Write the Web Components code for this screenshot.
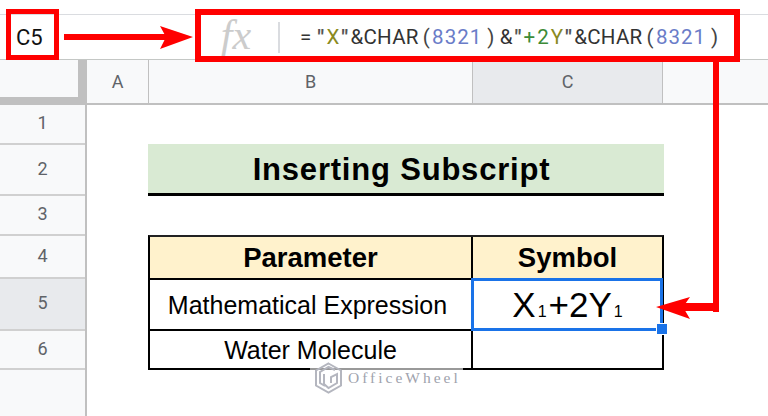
<!DOCTYPE html>
<html>
<head>
<meta charset="utf-8">
<style>
  html, body { margin: 0; padding: 0; background: #fff; }
  body { width: 768px; height: 416px; overflow: hidden; font-family: "Liberation Sans", Arial, sans-serif; }
</style>
</head>
<body>
<sheet-shot>
  <formula-bar slot="bar" cell="C5"></formula-bar>
  <col-headers slot="cols"></col-headers>
  <row-headers slot="rows"></row-headers>
  <data-table slot="body"></data-table>
</sheet-shot>

<script>
class SheetShot extends HTMLElement {
    constructor() {
        super();
        this.attachShadow({ mode: "open" });
    }

    connectedCallback() {
        this.shadowRoot.innerHTML = /* html */ `
            <style>
                :host {
                    display: grid;
                    position: relative;
                    width: 768px;
                    height: 416px;
                    grid-template-columns: 87px 1fr;
                    grid-template-rows: 60px 45px 1fr;
                    overflow: hidden;
                }
                ::slotted([slot=bar]) { grid-column: 1 / 3; grid-row: 1; }
                ::slotted([slot=cols]) { grid-column: 2; grid-row: 2; }
                ::slotted([slot=rows]) { grid-column: 1; grid-row: 3; }
                ::slotted([slot=body]) { grid-column: 2; grid-row: 3; }
                .corner {
                    grid-column: 1;
                    grid-row: 2;
                    background: #f8f9fa;
                    box-sizing: border-box;
                    border-right: 9px solid #c0c0c0;
                    border-bottom: 8px solid #c0c0c0;
                }
                .overlay { position: absolute; left: 0; top: 0; pointer-events: none; }
                .box { position: absolute; border: 5px solid #f00; box-sizing: border-box; }
            </style>
            <div class="corner"></div>
            <slot name="bar"></slot>
            <slot name="cols"></slot>
            <slot name="rows"></slot>
            <slot name="body"></slot>
            <div class="box" style="left:6px;top:9px;width:53px;height:51px"></div>
            <div class="box" style="left:195px;top:9px;width:545px;height:53px;border-width:6px"></div>
            <svg class="overlay" width="768" height="416" viewBox="0 0 768 416">
                <g fill="#f00">
                    <rect x="64" y="34" width="102" height="6"/>
                    <path d="M193 37 L160 26 L166 37 L160 49 Z"/>
                    <rect x="713" y="62" width="6" height="250"/>
                    <rect x="680" y="303" width="39" height="8"/>
                    <path d="M656 307 L690 297 L683 307 L690 319 Z"/>
                </g>
            </svg>
            <water-mark></water-mark>
        `;
    }
}

class FormulaBar extends HTMLElement {
    constructor() {
        super();
        this.attachShadow({ mode: "open" });
    }

    connectedCallback() {
        this.shadowRoot.innerHTML = /* html */ `
            <style>
                :host {
                    display: flex;
                    height: 60px;
                    box-sizing: border-box;
                    padding-top: 14px;
                    align-items: stretch;
                }
                .inner {
                    flex: 1;
                    display: flex;
                    align-items: center;
                    border-top: 1px solid #dadce0;
                    border-bottom: 1px solid #c4c7c5;
                }
                .name {
                    width: 62px;
                    padding-left: 16px;
                    box-sizing: border-box;
                    font: 22px Roboto, sans-serif;
                    color: #111;
                }
                .fx {
                    margin-left: 154px;
                    width: 40px;
                    padding-bottom: 5px;
                    font: italic 42px "Liberation Serif", serif;
                    color: #ccc;
                    text-align: center;
                    line-height: 40px;
                }
                .sep { width: 2px; height: 31px; margin-left: 22px; background: #dadce0; }
                .formula {
                    margin-left: 20px;
                    font: 20.5px Roboto, sans-serif;
                    letter-spacing: .3px;
                    color: #333;
                    white-space: pre;
                }
                .eq { padding-right: 4px; }
                .q { padding: 0 2px; font-weight: bold; color: #555; }
                .str { color: #3d8b37; letter-spacing: 2px; }
                .x { color: #8a8a1f; }
                .num { color: #6a7cc8; letter-spacing: 1px; }
                .po { color: #444; padding: 0 2px 0 4px; }
                .pc { color: #444; padding: 0 5px; }
            </style>
            <div class="inner">
                <div class="name">${this.getAttribute("cell")}</div>
                <div class="fx">fx</div>
                <div class="sep"></div>
                <div class="formula"><span class="eq">=</span><span class="q">"</span><span class="x">X</span><span class="q">"</span>&amp;CHAR<span class="po">(</span><span class="num">8321</span><span class="pc">)</span>&amp;<span class="q">"</span><span class="str">+2</span><span class="x">Y</span><span class="q">"</span>&amp;CHAR<span class="po">(</span><span class="num">8321</span><span class="pc">)</span></div>
            </div>
        `;
    }
}

class ColHeaders extends HTMLElement {
    constructor() {
        super();
        this.attachShadow({ mode: "open" });
    }

    connectedCallback() {
        this.shadowRoot.innerHTML = /* html */ `
            <style>
                :host {
                    display: grid;
                    grid-template-columns: 62px 324px 190px 1fr;
                    height: 45px;
                    background: #f8f9fa;
                    font: 18px Roboto, sans-serif;
                    color: #5f6368;
                }
                div {
                    display: flex;
                    align-items: center;
                    justify-content: center;
                    box-sizing: border-box;
                    border-right: 1px solid #c0c0c0;
                    border-bottom: 2px solid #c0c0c0;
                }
                .on { background: #e8eaed; }
                .last { border-right: 0; }
            </style>
            <div>A</div><div>B</div><div class="on">C</div><div class="last"></div>
        `;
    }
}

class RowHeaders extends HTMLElement {
    constructor() {
        super();
        this.attachShadow({ mode: "open" });
    }

    connectedCallback() {
        const rows = [[1, 40], [2, 51], [3, 40], [4, 43], [5, 52], [6, 39]];
        this.shadowRoot.innerHTML = /* html */ `
            <style>
                :host {
                    display: flex;
                    flex-direction: column;
                    background: #f8f9fa;
                    border-right: 2px solid #c0c0c0;
                    box-sizing: border-box;
                    font: 18px Roboto, sans-serif;
                    color: #5f6368;
                }
                div {
                    display: flex;
                    align-items: center;
                    justify-content: center;
                    box-sizing: border-box;
                    padding-bottom: 3px;
                    border-bottom: 2px solid #d0d0d0;
                }
                .on { background: #e8eaed; }
            </style>
            ${rows.map(r => `<div class="${r[0] === 5 ? "on" : ""}" style="height:${r[1]}px">${r[0]}</div>`).join("")}
        `;
    }
}

class DataTable extends HTMLElement {
    constructor() {
        super();
        this.attachShadow({ mode: "open" });
    }

    connectedCallback() {
        this.shadowRoot.innerHTML = /* html */ `
            <style>
                :host {
                    display: flex;
                    flex-direction: column;
                    position: relative;
                    padding: 39px 0 0 61px;
                    font-family: "Liberation Sans", Arial, sans-serif;
                    color: #000;
                }
                .title {
                    width: 516px;
                    height: 52px;
                    box-sizing: border-box;
                    background: #d9ead3;
                    border-bottom: 3px solid #000;
                    padding: 3px 9px 0 0;
                    display: flex;
                    align-items: center;
                    justify-content: center;
                    font-size: 31px;
                    font-weight: bold;
                    letter-spacing: .8px;
                }
                .grid {
                    margin-top: 39px;
                    width: 516px;
                    box-sizing: border-box;
                    display: grid;
                    grid-template-columns: 323px 1fr;
                    grid-template-rows: 43px 51px 37px;
                    border: 2px solid #000;
                    border-top-color: #222;
                }
                .grid div {
                    display: flex;
                    align-items: center;
                    justify-content: center;
                    box-sizing: border-box;
                    font-size: 25px;
                    padding-top: 2px;
                }
                .grid .hd { background: #fff2cc; font-weight: bold; font-size: 27.5px; padding-top: 0; }
                .l { border-right: 2px solid #000; }
                .r2 { border-bottom: 2px solid #000; }
                .grid .math { padding-right: 6px; }
                .sel {
                    position: absolute;
                    left: 384px;
                    top: 173px;
                    width: 192px;
                    height: 53px;
                    box-sizing: border-box;
                    border: 3px solid #1a73e8;
                    background: #fff;
                    display: flex;
                    align-items: center;
                    justify-content: center;
                    padding-left: 3px;
                    font-size: 35px;
                    color: #000;
                }
                .sel small { font-size: 16px; align-self: flex-end; padding: 0 2px 8px; line-height: 1; }
                .dot {
                    position: absolute;
                    right: -8px;
                    bottom: -7px;
                    width: 12px;
                    height: 12px;
                    background: #1a73e8;
                    border: 1px solid #fff;
                    box-sizing: border-box;
                }
            </style>
            <div class="title">Inserting Subscript</div>
            <div class="grid">
                <div class="hd l r2">Parameter</div>
                <div class="hd r2">Symbol</div>
                <div class="l r2 math">Mathematical Expression</div>
                <div class="r2"></div>
                <div class="l">Water Molecule</div>
                <div></div>
            </div>
            <div class="sel">X<small>1</small>+2Y<small>1</small><span class="dot"></span></div>
        `;
    }
}

class WaterMark extends HTMLElement {
    constructor() {
        super();
        this.attachShadow({ mode: "open" });
    }

    connectedCallback() {
        this.shadowRoot.innerHTML = /* html */ `
            <style>
                :host {
                    position: absolute;
                    left: 310px;
                    top: 362px;
                    display: flex;
                    align-items: center;
                    gap: 5px;
                    padding: 0 2px 0 4px;
                    height: 32px;
                    background: rgba(255,255,255,.6);
                    font: 15.5px "Liberation Serif", serif;
                    letter-spacing: 3px;
                    color: #a0a3ad;
                }
            </style>
            <svg width="29" height="32" viewBox="0 0 29 32" fill="none" stroke="#b4b6bf" stroke-width="2">
                <path d="M14.5 1.5 L27 8.5 V23.5 L14.5 30.5 L2 23.5 V8.5 Z"/>
                <path d="M21 8 L14.5 5 L6 10 V21 L11 24"/>
                <path d="M10 12 V22 L14.5 26 L23 21 V12 L17 15 V21"/>
            </svg>
            <span>OfficeWheel</span>
        `;
    }
}

customElements.define("sheet-shot", SheetShot);
customElements.define("formula-bar", FormulaBar);
customElements.define("col-headers", ColHeaders);
customElements.define("row-headers", RowHeaders);
customElements.define("data-table", DataTable);
customElements.define("water-mark", WaterMark);
</script>
</body>
</html>
